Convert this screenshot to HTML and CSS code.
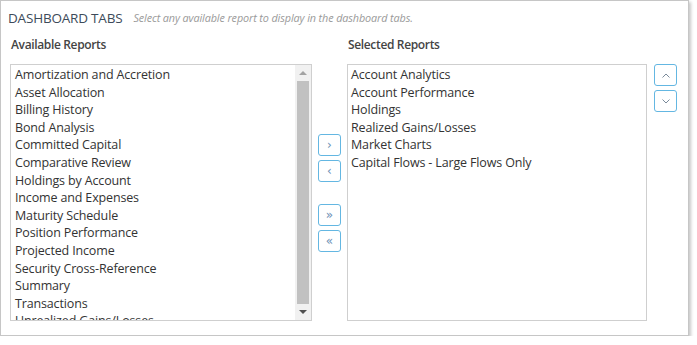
FILE: index.html
```html
<!DOCTYPE html>
<html>
<head>
<meta charset="utf-8">
<link rel="stylesheet" href="styles.css">
</head>
<body>
<div class="panel">
  <div class="header">
    <span class="title">DASHBOARD TABS</span>
    <span class="hint">Select any available report to display in the dashboard tabs.</span>
  </div>
  <div class="columns">
    <div class="col col-left">
      <div class="label">Available Reports</div>
      <div class="listbox">
        <ul class="items">
          <li>Amortization and Accretion</li>
          <li>Asset Allocation</li>
          <li>Billing History</li>
          <li>Bond Analysis</li>
          <li>Committed Capital</li>
          <li>Comparative Review</li>
          <li>Holdings by Account</li>
          <li>Income and Expenses</li>
          <li>Maturity Schedule</li>
          <li>Position Performance</li>
          <li>Projected Income</li>
          <li>Security Cross-Reference</li>
          <li>Summary</li>
          <li>Transactions</li>
          <li>Unrealized Gains/Losses</li>
        </ul>
        <div class="scrollbar">
          <div class="sb-arrow"><span class="tri-up"></span></div>
          <div class="sb-thumb"></div>
          <div class="sb-arrow"><span class="tri-down"></span></div>
        </div>
      </div>
    </div>
    <div class="mid">
      <div class="btn-group">
        <button class="btn">&#8250;</button>
        <button class="btn">&#8249;</button>
      </div>
      <div class="btn-group">
        <button class="btn">&#187;</button>
        <button class="btn">&#171;</button>
      </div>
    </div>
    <div class="col col-right">
      <div class="label">Selected Reports</div>
      <div class="listbox listbox-right">
        <ul class="items">
          <li>Account Analytics</li>
          <li>Account Performance</li>
          <li>Holdings</li>
          <li>Realized Gains/Losses</li>
          <li>Market Charts</li>
          <li>Capital Flows - Large Flows Only</li>
        </ul>
      </div>
    </div>
    <div class="side">
      <button class="btn">
        <svg width="8" height="5" viewBox="0 0 8 5"><path d="M0.5 4.5 L4 1 L7.5 4.5" fill="none" stroke="#7a8a9a" stroke-width="1"/></svg>
      </button>
      <button class="btn">
        <svg width="8" height="5" viewBox="0 0 8 5"><path d="M0.5 0.5 L4 4 L7.5 0.5" fill="none" stroke="#7a8a9a" stroke-width="1"/></svg>
      </button>
    </div>
  </div>
</div>
</body>
</html>
```
FILE: styles.css
```css
html, body {
  margin: 0;
  padding: 0;
  background: #ffffff;
}
body {
  font-family: "Open Sans", "Noto Sans", sans-serif;
  color: #333;
}
.panel {
  width: 687px;
  height: 334px;
  border: 1px solid #c6c6c6;
  box-shadow: 2px 2px 3px rgba(0, 0, 0, 0.22);
  box-sizing: content-box;
}
.header {
  height: 33px;
  padding-left: 7px;
  display: flex;
  align-items: center;
  white-space: nowrap;
}
.title {
  font-size: 13.5px;
  color: #3d4b5a;
  letter-spacing: -0.2px;
}
.hint {
  margin-left: 11px;
  font-size: 10.8px;
  font-style: italic;
  color: #9a9a9a;
  letter-spacing: -0.1px;
}
.columns {
  display: flex;
  padding-left: 9px;
}
.label {
  font-size: 12px;
  font-weight: 600;
  color: #444;
  height: 22px;
  line-height: 22px;
  padding-left: 1px;
  margin-bottom: 8px;
  letter-spacing: -0.35px;
}
.col-left {
  width: 302px;
}
.col-right {
  width: 300px;
}
.listbox {
  height: 255px;
  border: 1px solid #cfcfcf;
  display: flex;
  overflow: hidden;
}
.items {
  list-style: none;
  margin: 0;
  padding: 1px 0 0 4px;
  flex: 1;
  overflow: hidden;
  font-size: 12.5px;
  line-height: 17.6px;
  letter-spacing: -0.15px;
  white-space: nowrap;
  color: #333;
}
.listbox-right .items {
  padding-left: 3px;
}
.scrollbar {
  width: 16px;
  background: #f1f1f1;
  display: flex;
  flex-direction: column;
}
.sb-arrow {
  height: 16px;
  display: flex;
  align-items: center;
  justify-content: center;
}
.tri-up {
  width: 0;
  height: 0;
  border-left: 4px solid transparent;
  border-right: 4px solid transparent;
  border-bottom: 4px solid #a3a3a3;
}
.tri-down {
  width: 0;
  height: 0;
  border-left: 4px solid transparent;
  border-right: 4px solid transparent;
  border-top: 4px solid #505050;
}
.sb-thumb {
  flex: 1;
  margin: 0 2px;
  background: #c1c1c1;
}
.mid {
  width: 35px;
  display: flex;
  flex-direction: column;
  align-items: center;
  padding-top: 100px;
  gap: 22px;
}
.btn-group {
  display: flex;
  flex-direction: column;
  gap: 4px;
}
.btn {
  width: 23px;
  height: 22px;
  padding: 0;
  margin: 0;
  border: 1px solid #64b7e2;
  border-radius: 3px;
  background: #fff;
  color: #6b8fb5;
  font-family: "DejaVu Sans", sans-serif;
  font-size: 12px;
  line-height: 18px;
  display: flex;
  align-items: center;
  justify-content: center;
  box-sizing: border-box;
}
.side {
  padding-top: 30px;
  padding-left: 7px;
  display: flex;
  flex-direction: column;
  gap: 4px;
}
```
